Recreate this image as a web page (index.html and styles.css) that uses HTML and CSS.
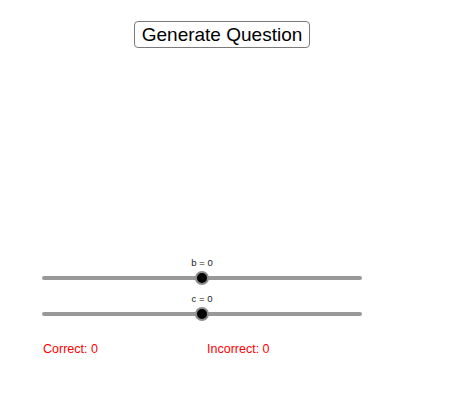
FILE: index.html
```html
<!DOCTYPE html>
<html lang="en">
<head>
  <meta charset="UTF-8" />
  <title>Quadratic Practice</title>
  <link rel="stylesheet" href="styles.css">
</head>
<body>
  <div class="applet">
    <div class="toolbar">
      <button class="gen-btn">Generate Question</button>
    </div>

    <div class="canvas"></div>

    <div class="sliders">
      <div class="slider">
        <div class="slider-label">b = 0</div>
        <div class="slider-track">
          <div class="track-line"></div>
          <div class="knob"></div>
        </div>
      </div>
      <div class="slider">
        <div class="slider-label">c = 0</div>
        <div class="slider-track">
          <div class="track-line"></div>
          <div class="knob"></div>
        </div>
      </div>
    </div>

    <div class="scores">
      <span class="score score-correct">Correct: 0</span>
      <span class="score">Incorrect: 0</span>
    </div>
  </div>
</body>
</html>
```

FILE: styles.css
```css
* {
  margin: 0;
  padding: 0;
  box-sizing: border-box;
}

body {
  font-family: "Liberation Sans", Arial, sans-serif;
  background: white;
  width: 474px;
  height: 395px;
  overflow: hidden;
}

.applet {
  display: flex;
  flex-direction: column;
}

.toolbar {
  padding: 21px 0 0 134px;
}

.gen-btn {
  width: 176px;
  height: 27px;
  background: white;
  border: 1px solid #7a7a7a;
  border-radius: 4px;
  font-family: inherit;
  font-size: 19px;
  color: #000;
  cursor: pointer;
}

.canvas {
  height: 209px;
}

.sliders {
  display: flex;
  flex-direction: column;
  padding-left: 42px;
}

.slider {
  width: 320px;
  height: 36px;
}

.slider-label {
  font-size: 9.5px;
  line-height: 12px;
  text-align: center;
  color: #222;
}

.slider-track {
  position: relative;
  height: 18px;
  display: flex;
  align-items: center;
}

.track-line {
  width: 100%;
  height: 4px;
  background: #999;
  border-radius: 2px;
}

.knob {
  position: absolute;
  left: 153px;
  top: 2px;
  width: 14px;
  height: 14px;
  border-radius: 50%;
  background: #000;
  border: 2px solid #8c8c8c;
}

.scores {
  display: flex;
  padding: 13px 0 0 43px;
}

.score {
  font-size: 12.5px;
  line-height: 15px;
  color: #ff0000;
}

.score-correct {
  width: 164px;
}
```
